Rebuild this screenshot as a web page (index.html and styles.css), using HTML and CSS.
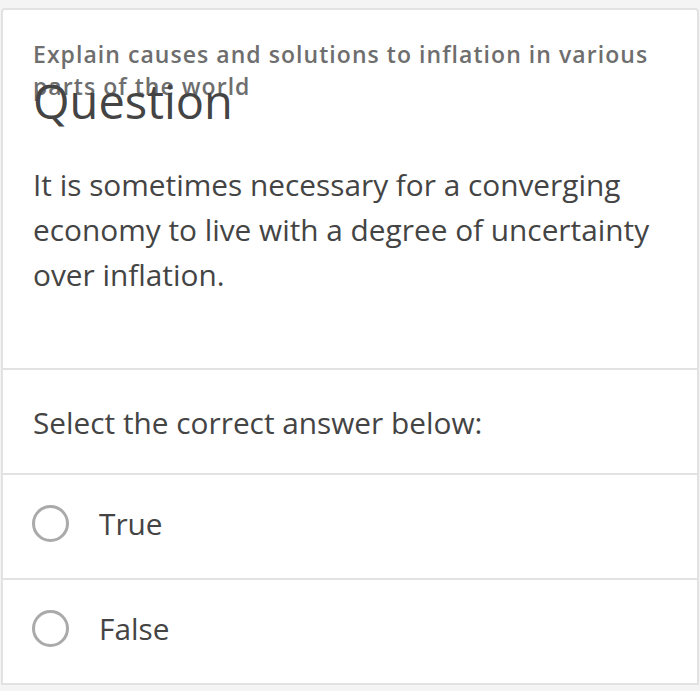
FILE: index.html
```html
<!DOCTYPE html>
<html lang="en">
<head>
<meta charset="utf-8">
<title>Question</title>
<link rel="stylesheet" href="styles.css">
</head>
<body>
<div class="card">
  <section class="block block-question">
    <div class="title">Explain causes and solutions to inflation in various parts of the world</div>
    <h1 class="heading">Question</h1>
    <p class="body-text">It is sometimes necessary for a converging economy to live with a degree of uncertainty over inflation.</p>
  </section>
  <section class="block block-prompt">
    <p class="prompt">Select the correct answer below:</p>
  </section>
  <label class="block option">
    <span class="radio"></span>
    <span class="option-text">True</span>
  </label>
  <label class="block option">
    <span class="radio"></span>
    <span class="option-text">False</span>
  </label>
</div>
</body>
</html>
```
FILE: styles.css
```css
html, body {
  margin: 0;
  padding: 0;
}
body {
  background: #f4f4f4;
  padding: 8px 1px 0 1px;
  font-family: "Open Sans", "Liberation Sans", sans-serif;
  color: #444;
}
.card {
  background: #fff;
  border: 2px solid #e2e2e2;
  border-bottom: none;
  border-radius: 4px 4px 0 0;
}
.block {
  border-bottom: 2px solid #e2e2e2;
  padding: 0 30px;
}
.block-question {
  padding-top: 28px;
  padding-bottom: 71px;
}
.title {
  font-size: 23px;
  font-weight: 600;
  letter-spacing: 1.05px;
  line-height: 32px;
  height: 36px;
  color: #6e6e6e;
}
.heading {
  margin: 0;
  font-size: 47px;
  font-weight: 400;
  line-height: 55px;
  color: #444;
}
.body-text {
  margin: 33px 0 0 0;
  font-size: 29.8px;
  line-height: 45px;
  color: #444;
}
.block-prompt {
  padding-top: 30px;
  padding-bottom: 28px;
}
.prompt {
  margin: 0;
  font-size: 29.8px;
  line-height: 45px;
  color: #444;
}
.option {
  display: flex;
  align-items: center;
  gap: 30px;
  height: 96px;
  padding-left: 29px;
  padding-bottom: 7px;
}
.radio {
  width: 31px;
  height: 31px;
  border: 3px solid #aaa;
  border-radius: 50%;
  flex: none;
}
.option-text {
  font-size: 29.8px;
  color: #444;
}
```
